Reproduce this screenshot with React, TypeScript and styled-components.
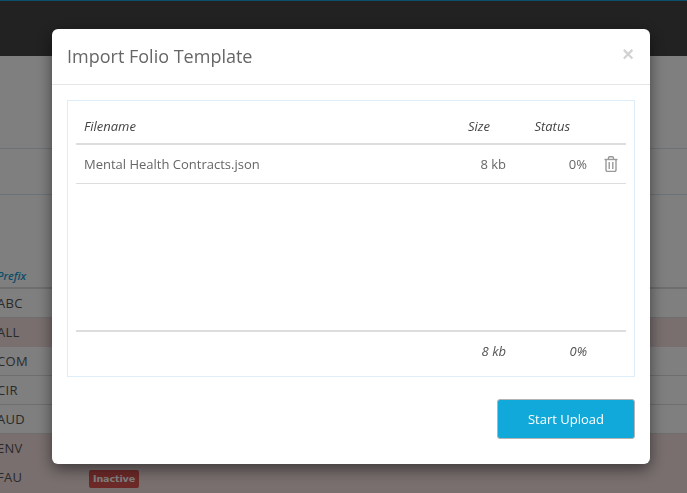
import React from 'react'
import styled, { createGlobalStyle } from 'styled-components'

const GlobalStyle = createGlobalStyle`
  html, body {
    margin: 0;
    padding: 0;
    height: 100%;
    overflow: hidden;
    background: #fff;
    font-family: "Open Sans", "Liberation Sans", sans-serif;
    color: #555;
  }
`

const Page = styled.div`
  height: 493px;
  overflow: hidden;
  background: #fff;
`

const TopBar = styled.div`
  height: 55px;
  background: #444;
  border-top: 1px solid #17a2d8;
`

const SubHeader = styled.div`
  height: 92px;
  border-bottom: 1px solid #d5e6f2;
`

const FilterBar = styled.div`
  height: 45px;
  border-bottom: 1px solid #d5e6f2;
`

const BackTable = styled.div`
  padding-top: 70px;
`

const BackHead = styled.div`
  height: 22px;
  border-bottom: 2px solid #ddd;
  font-size: 11px;
  font-weight: 600;
  font-style: italic;
  color: #1b9bd1;
  line-height: 22px;
  white-space: nowrap;
  text-indent: -3px;
`

const BackRow = styled.div<{ $danger?: boolean }>`
  height: 28px;
  display: flex;
  align-items: center;
  border-bottom: 1px solid ${(p) => (p.$danger ? '#f2dede' : '#ddd')};
  background: ${(p) => (p.$danger ? '#f2dede' : '#fff')};
  font-size: 13px;
  letter-spacing: 0.3px;
`

const PrefixCell = styled.span`
  width: 92px;
  flex: none;
  margin-left: -3px;
`

const InactiveBadge = styled.span`
  margin-top: 3px;
  background: #d9534f;
  color: #fff;
  font-size: 9.5px;
  font-weight: 700;
  line-height: 18px;
  padding: 0 4px;
  border-radius: 2px;
  font-family: "DejaVu Sans", "Open Sans", sans-serif;
  letter-spacing: -0.1px;
`

const Backdrop = styled.div`
  position: fixed;
  inset: 0;
  background: rgba(0, 0, 0, 0.5);
`

const Modal = styled.div`
  position: fixed;
  left: 52px;
  top: 29px;
  width: 598px;
  height: 435px;
  display: flex;
  flex-direction: column;
  background: #fff;
  border-radius: 6px;
  box-shadow: 0 5px 15px rgba(0, 0, 0, 0.5);
`

const ModalHeader = styled.div`
  height: 56px;
  flex: none;
  box-sizing: border-box;
  padding: 0 16px 1px 15px;
  display: flex;
  align-items: center;
  justify-content: space-between;
  border-bottom: 1px solid #e5e5e5;
`

const Title = styled.h4`
  margin: 0;
  font-size: 18px;
  font-weight: 400;
  color: #666;
`

const Close = styled.span`
  font-size: 20px;
  font-weight: 700;
  color: #d2d2d2;
  line-height: 1;
  margin-top: -5px;
  font-family: "Liberation Sans", sans-serif;
`

const ModalBody = styled.div`
  flex: 1;
  padding: 15px 15px 0;
`

const Panel = styled.div`
  height: 277px;
  box-sizing: border-box;
  padding: 0 8px;
  border: 1px solid #deedfa;
  display: flex;
  flex-direction: column;
`

const Columns = styled.div`
  display: grid;
  grid-template-columns: 1fr 71px 81px 31px;
  align-items: center;
  padding: 0 8px;
  font-size: 13px;
`

const HeadRow = styled(Columns)`
  height: 44px;
  padding-top: 8px;
  box-sizing: border-box;
  border-bottom: 2px solid #ddd;
  font-style: italic;
  color: #444;
`

const FileRow = styled(Columns)`
  height: 38px;
  border-bottom: 1px solid #ddd;
  color: #666;
`

const TotalRow = styled(Columns)`
  margin-top: auto;
  height: 46px;
  box-sizing: border-box;
  padding-bottom: 6px;
  border-top: 2px solid #ddd;
  font-style: italic;
  color: #555;
`

const HeadCell = styled.span<{ $pad: number }>`
  text-align: right;
  padding-right: ${(p) => p.$pad}px;
`

const NumCell = styled.span`
  text-align: right;
`

const IconCell = styled.span`
  display: flex;
  justify-content: flex-end;
  color: #999;
`

const ModalFooter = styled.div`
  flex: none;
  display: flex;
  justify-content: flex-end;
  padding: 0 15px 25px;
`

const UploadButton = styled.button`
  width: 138px;
  height: 40px;
  border: 1px solid #b3b3b3;
  border-radius: 3px;
  background: #11a9d9;
  color: #fff;
  font-family: inherit;
  font-size: 13px;
`

function TrashIcon() {
  return (
    <svg width="14" height="16" viewBox="0 0 14 16" fill="none" stroke="currentColor" strokeWidth="1.4">
      <path d="M0.5 3.5H13.5" />
      <path d="M4.5 3.5V2A1.2 1.2 0 0 1 5.7 0.8H8.3A1.2 1.2 0 0 1 9.5 2V3.5" />
      <path d="M2 3.5V14A1.4 1.4 0 0 0 3.4 15.4H10.6A1.4 1.4 0 0 0 12 14V3.5" />
      <path d="M5.2 6V13M8.8 6V13" />
    </svg>
  )
}

const ROWS = [
  { prefix: 'ABC' },
  { prefix: 'ALL', danger: true },
  { prefix: 'COM' },
  { prefix: 'CIR' },
  { prefix: 'AUD' },
  { prefix: 'ENV', danger: true },
  { prefix: 'FAU', danger: true, inactive: true },
  { prefix: '', danger: true },
]

export default function App() {
  return (
    <Page>
      <GlobalStyle />
      <TopBar />
      <SubHeader />
      <FilterBar />
      <BackTable>
        <BackHead>Prefix</BackHead>
        {ROWS.map((row) => (
          <BackRow key={row.prefix} $danger={row.danger}>
            <PrefixCell>{row.prefix}</PrefixCell>
            {row.inactive && <InactiveBadge>Inactive</InactiveBadge>}
          </BackRow>
        ))}
      </BackTable>
      <Backdrop />
      <Modal>
        <ModalHeader>
          <Title>Import Folio Template</Title>
          <Close>×</Close>
        </ModalHeader>
        <ModalBody>
          <Panel>
            <HeadRow>
              <span>Filename</span>
              <HeadCell $pad={16}>Size</HeadCell>
              <HeadCell $pad={17}>Status</HeadCell>
              <span />
            </HeadRow>
            <FileRow>
              <span>Mental Health Contracts.json</span>
              <NumCell>8 kb</NumCell>
              <NumCell>0%</NumCell>
              <IconCell>
                <TrashIcon />
              </IconCell>
            </FileRow>
            <TotalRow>
              <span />
              <NumCell>8 kb</NumCell>
              <NumCell>0%</NumCell>
              <span />
            </TotalRow>
          </Panel>
        </ModalBody>
        <ModalFooter>
          <UploadButton>Start Upload</UploadButton>
        </ModalFooter>
      </Modal>
    </Page>
  )
}
